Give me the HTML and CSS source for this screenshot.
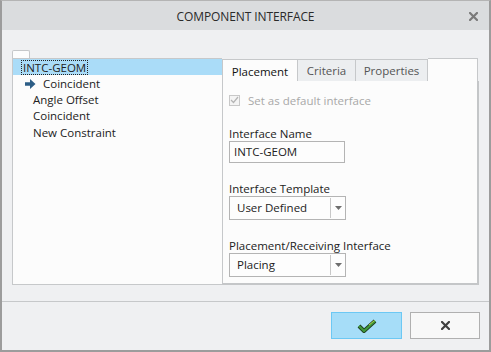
FILE: index.html
```html
<!DOCTYPE html>
<html>
<head>
<meta charset="utf-8">
<link rel="stylesheet" href="styles.css">
</head>
<body>
<div class="window">
  <div class="titlebar">
    <span class="title">COMPONENT INTERFACE</span>
    <svg class="close" width="9" height="9" viewBox="0 0 9 9"><path d="M1 1 L8 8 M8 1 L1 8" stroke="#7a7a7a" stroke-width="2.2" stroke-linecap="square"/></svg>
  </div>
  <div class="content">
    <div class="minitab"></div>
    <div class="main">
      <div class="tree">
        <div class="row sel"><span class="focus">INTC-GEOM</span></div>
        <div class="row child">
          <svg class="arrow" width="11" height="10" viewBox="0 0 11 10"><path d="M0 3.2 H5 V0 L10.5 5 L5 10 V6.8 H0 Z" fill="#2c5d86"/></svg>
          <span>Coincident</span>
        </div>
        <div class="row">Angle Offset</div>
        <div class="row">Coincident</div>
        <div class="row">New Constraint</div>
      </div>
      <div class="panel">
        <div class="tabs">
          <div class="tab active">Placement</div>
          <div class="tab t2">Criteria</div>
          <div class="tab t3">Properties</div>
          <div class="tabfill"></div>
        </div>
        <div class="page">
          <div class="check">
            <span class="box"><svg width="9" height="8" viewBox="0 0 9 8"><path d="M1 4 L3.5 6.5 L8 1" fill="none" stroke="#b4b4b4" stroke-width="1.2"/></svg></span>
            <span>Set as default interface</span>
          </div>
          <div class="field f1">
            <div class="label">Interface Name</div>
            <div class="input">INTC-GEOM</div>
          </div>
          <div class="field">
            <div class="label">Interface Template</div>
            <div class="select"><span class="val">User Defined</span><span class="drop"><svg width="7" height="4" viewBox="0 0 7 4"><path d="M0 0 H7 L3.5 4 Z" fill="#6e6e6e"/></svg></span></div>
          </div>
          <div class="field">
            <div class="label">Placement/Receiving Interface</div>
            <div class="select"><span class="val">Placing</span><span class="drop"><svg width="7" height="4" viewBox="0 0 7 4"><path d="M0 0 H7 L3.5 4 Z" fill="#6e6e6e"/></svg></span></div>
          </div>
        </div>
      </div>
    </div>
  </div>
  <div class="sep"></div>
  <div class="buttons">
    <div class="btn ok"><svg width="20" height="14" viewBox="0 0 20 14"><path d="M2 7 L7 12 L18 2" fill="none" stroke="#1f3d1f" stroke-width="4" stroke-linejoin="miter"/><path d="M2 7 L7 12 L18 2" fill="none" stroke="#3f9a3c" stroke-width="2.2"/><path d="M12 6 L17.5 1.5" fill="none" stroke="#d8e84a" stroke-width="0.8"/></svg></div>
    <div class="btn cancel"><svg width="9" height="9" viewBox="0 0 9 9"><path d="M1 1 L8 8 M8 1 L1 8" stroke="#404040" stroke-width="2.2" stroke-linecap="square"/></svg></div>
  </div>
</div>
</body>
</html>
```

FILE: styles.css
```css
html, body {
  margin: 0;
  padding: 0;
  background: #eff0f2;
}
body {
  font-family: "Open Sans", "Noto Sans", sans-serif;
  font-size: 11.5px;
  color: #222;
}
.window {
  width: 491px;
  height: 352px;
  box-sizing: border-box;
  border: 2px solid #9c9c9c;
  border-top: 1px solid #b4b4b4;
  background: #eff0f2;
  display: flex;
  flex-direction: column;
}
.titlebar {
  height: 29px;
  background: #dadcde;
  display: flex;
  align-items: center;
  justify-content: center;
  position: relative;
}
.title {
  font-size: 12px;
  color: #2a2a2a;
  letter-spacing: -0.1px;
  padding-top: 1px;
}
.close {
  position: absolute;
  right: 11px;
  top: 11px;
}
.content {
  padding: 20px 10px 0 10px;
  height: 255px;
  box-sizing: border-box;
}
.minitab {
  width: 18px;
  height: 8px;
  box-sizing: border-box;
  border: 1px solid #c6c8ca;
  border-bottom: none;
  border-radius: 2px 2px 0 0;
  background: #fdfdfd;
}
.main {
  display: flex;
  height: 227px;
}
.tree {
  width: 210px;
  box-sizing: border-box;
  border: 1px solid #c6c8ca;
  border-right: none;
  background: #fcfcfc;
}
.row {
  height: 16.3px;
  line-height: 16px;
  padding-left: 20px;
  padding-top: 1px;
  box-sizing: border-box;
  display: flex;
  align-items: center;
  white-space: nowrap;
}
.row.sel {
  background: #aadcf8;
  padding-left: 8px;
  padding-top: 0;
  height: 16px;
}
.focus {
  border: 1px dotted #222;
  line-height: 13px;
  padding: 0 1px;
}
.row.child {
  padding-left: 12px;
}
.arrow {
  margin-right: 7px;
}
.panel {
  width: 257px;
  display: flex;
  flex-direction: column;
}
.tabs {
  display: flex;
  height: 24px;
}
.tab {
  box-sizing: border-box;
  display: flex;
  align-items: center;
  justify-content: center;
  border: 1px solid #c6c8ca;
  border-left: none;
  background: #eceef0;
  color: #555;
  margin-top: 1px;
  height: 23px;
}
.tab.active {
  width: 76px;
  background: #fcfcfc;
  color: #111;
  border-left: 1px solid #c6c8ca;
  border-bottom: none;
  height: 24px;
}
.t2 { width: 58px; }
.t3 { width: 72px; }
.tabfill {
  flex: 1;
  box-sizing: border-box;
  background: #fcfcfc;
  border-top: 1px solid #c6c8ca;
  border-right: 1px solid #c6c8ca;
  border-bottom: 1px solid #c6c8ca;
  height: 25px;
  margin-right: 1px;
}
.page {
  flex: 1;
  box-sizing: border-box;
  background: #fcfcfc;
  border-left: 1px solid #c6c8ca;
  border-right: 2px solid #c4c6c8;
  border-bottom: 2px solid #c4c6c8;
  padding: 11px 0 0 6px;
  margin-top: -1px;
}
.check {
  display: flex;
  align-items: center;
  height: 16px;
  color: #a8a8a8;
}
.box {
  width: 11px;
  height: 11px;
  box-sizing: border-box;
  border: 1px solid #c8c8c8;
  background: #f4f4f4;
  display: flex;
  align-items: center;
  justify-content: center;
  margin-right: 8px;
}
.field {
  margin-top: 17px;
}
.label {
  height: 16px;
  line-height: 17px;
  color: #222;
}
.input {
  width: 116px;
  height: 22px;
  box-sizing: border-box;
  border: 1px solid #b4b4b4;
  background: #fdfdfd;
  line-height: 20px;
  padding-left: 4px;
}
.select {
  width: 117px;
  height: 24px;
  box-sizing: border-box;
  border: 1px solid #b4b4b4;
  background: #fdfdfd;
  display: flex;
}
.val {
  flex: 1;
  line-height: 22px;
  padding-left: 7px;
}
.drop {
  width: 14px;
  border-left: 1px solid #c8c8c8;
  display: flex;
  align-items: center;
  justify-content: center;
  margin: 1px 0;
}
.sep {
  height: 1px;
  background: #c6c8ca;
  margin-top: 16px;
}
.buttons {
  display: flex;
  justify-content: flex-end;
  gap: 8px;
  padding: 10px 9px 0 0;
}
.btn {
  height: 27px;
  box-sizing: border-box;
  display: flex;
  align-items: center;
  justify-content: center;
}
.ok {
  width: 71px;
  background: #a6ddf8;
  border: 1px solid #6cc8f4;
}
.cancel {
  width: 70px;
  background: #f8f8f8;
  border: 1px solid #b0b0b0;
}
```
